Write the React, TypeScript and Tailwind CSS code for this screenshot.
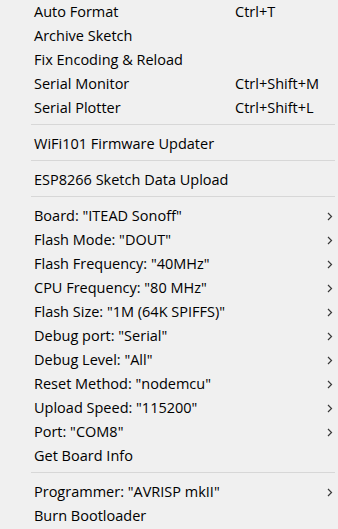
import React from "react";

type Item = { label: string; shortcut?: string; sub?: boolean } | "sep";

const items: Item[] = [
  { label: "Auto Format", shortcut: "Ctrl+T" },
  { label: "Archive Sketch" },
  { label: "Fix Encoding & Reload" },
  { label: "Serial Monitor", shortcut: "Ctrl+Shift+M" },
  { label: "Serial Plotter", shortcut: "Ctrl+Shift+L" },
  "sep",
  { label: "WiFi101 Firmware Updater" },
  "sep",
  { label: "ESP8266 Sketch Data Upload" },
  "sep",
  { label: 'Board: "ITEAD Sonoff"', sub: true },
  { label: 'Flash Mode: "DOUT"', sub: true },
  { label: 'Flash Frequency: "40MHz"', sub: true },
  { label: 'CPU Frequency: "80 MHz"', sub: true },
  { label: 'Flash Size: "1M (64K SPIFFS)"', sub: true },
  { label: 'Debug port: "Serial"', sub: true },
  { label: 'Debug Level: "All"', sub: true },
  { label: 'Reset Method: "nodemcu"', sub: true },
  { label: 'Upload Speed: "115200"', sub: true },
  { label: 'Port: "COM8"', sub: true },
  { label: "Get Board Info" },
  "sep",
  { label: 'Programmer: "AVRISP mkII"', sub: true },
  { label: "Burn Bootloader" },
];

function Chevron() {
  return (
    <svg width="6" height="9" viewBox="0 0 6 9" className="block">
      <path d="M1 1 L4.5 4.5 L1 8" fill="none" stroke="#3a3a3a" strokeWidth="1.2" />
    </svg>
  );
}

export default function App() {
  return (
    <div
      className="w-[338px] h-[529px] overflow-hidden bg-[#f0f0f0] text-black text-[14.5px]"
      style={{ fontFamily: '"Open Sans", "Liberation Sans", Arial, sans-serif' }}
    >
      <div className="-mt-px flex flex-col">
        {items.map((it, i) =>
          it === "sep" ? (
            <div key={i} className="h-[12px] pl-[31px] pr-[3px] pt-[5px]">
              <div className="h-px bg-[#d7d7d7]" />
            </div>
          ) : (
            <div key={i} className="h-[24px] pt-[2px] flex items-center">
              <div className="pl-[34px] w-[235px] whitespace-nowrap">{it.label}</div>
              <div className="flex-1 whitespace-nowrap">{it.shortcut ?? ""}</div>
              <div className="w-[11px] flex items-center">{it.sub ? <Chevron /> : null}</div>
            </div>
          )
        )}
      </div>
    </div>
  );
}
